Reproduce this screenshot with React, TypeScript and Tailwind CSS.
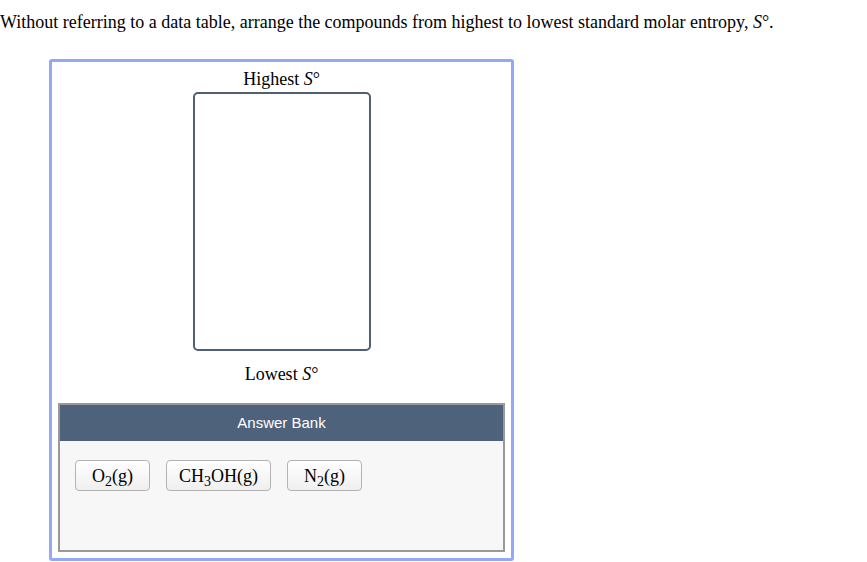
import React from "react";

const serif = { fontFamily: '"Liberation Serif", "Times New Roman", serif' };

function Chip({ children, w }: { children: React.ReactNode; w: string }) {
  return (
    <div
      className={`h-[31px] ${w} flex items-center justify-center rounded-[4px] border border-[#b3b3b3] bg-gradient-to-b from-[#ffffff] to-[#efefef] text-[18px] leading-none text-black`}
      style={serif}
    >
      {children}
    </div>
  );
}

function Sub({ children }: { children: React.ReactNode }) {
  return <span className="relative top-[6px] text-[14px] leading-none">{children}</span>;
}

function SDeg() {
  return (
    <>
      <i>S</i>°
    </>
  );
}

export default function App() {
  return (
    <div className="w-[867px] h-[562px] bg-white overflow-hidden" style={serif}>
      <p className="pt-[12px] text-[18px] leading-[20px] text-black">
        Without referring to a data table, arrange the compounds from highest to lowest standard molar entropy, <SDeg />.
      </p>
      <div className="ml-[49px] mt-[27px] w-[465px] h-[502px] border-[3px] border-[#93a8f6] rounded-[3px] flex flex-col items-center">
        <div className="mt-[7px] text-[18px] leading-[20px]">
          Highest <SDeg />
        </div>
        <div className="mt-[3px] w-[178px] h-[259px] border-2 border-[#4f5f77] rounded-[5px]" />
        <div className="mt-[13px] text-[18px] leading-[20px]">
          Lowest <SDeg />
        </div>
        <div className="mt-[19px] w-[447px] h-[149px] border-2 border-[#999999] flex flex-col">
          <div
            className="h-[36px] bg-[#4f627c] flex items-center justify-center text-white text-[15px]"
            style={{ fontFamily: '"Liberation Sans", Arial, sans-serif' }}
          >
            Answer Bank
          </div>
          <div className="flex-1 bg-[#f7f7f7] flex items-start gap-[16px] pl-[15px] pt-[19px]">
            <Chip w="w-[75px]">
              O<Sub>2</Sub>(g)
            </Chip>
            <Chip w="w-[105px]">
              CH<Sub>3</Sub>OH(g)
            </Chip>
            <Chip w="w-[75px]">
              N<Sub>2</Sub>(g)
            </Chip>
          </div>
        </div>
      </div>
    </div>
  );
}
